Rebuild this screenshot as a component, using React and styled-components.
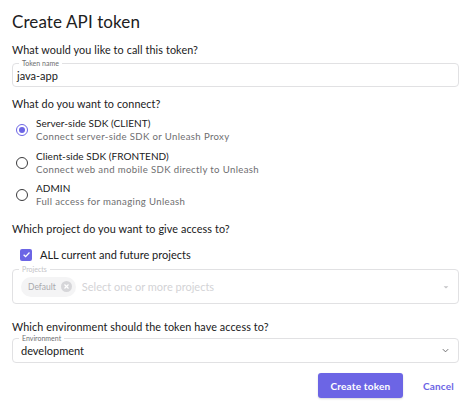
import React from "react";
import styled, { createGlobalStyle } from "styled-components";

const GlobalStyle = createGlobalStyle`
  body {
    margin: 0;
    background: #ffffff;
    font-family: "Lato", "Noto Sans", sans-serif;
    color: #202021;
  }
`;

const Page = styled.div`
  width: 474px;
  height: 414px;
  box-sizing: border-box;
  padding: 10px 15px 0 12px;
  display: flex;
  flex-direction: column;
`;

const Title = styled.h1`
  margin: 0;
  font-size: 17px;
  line-height: 24px;
  font-weight: 400;
  letter-spacing: 0.1px;
`;

const Question = styled.p`
  margin: ${(p) => p.$top || 0}px 0 0;
  font-size: 10.8px;
  line-height: 14px;
  letter-spacing: 0.1px;
`;

const Field = styled.div`
  position: relative;
  margin-top: ${(p) => p.$top || 0}px;
  height: ${(p) => p.$height || 24}px;
  box-sizing: border-box;
  border: 1px solid #e1e1e3;
  border-radius: 4px;
  display: flex;
  align-items: center;
  padding: 0 ${(p) => p.$padX || 8}px;
  gap: 6px;
`;

const FieldLabel = styled.span`
  position: absolute;
  top: -5px;
  left: 6px;
  padding: 0 3px;
  background: #ffffff;
  font-size: 7px;
  line-height: 8px;
  color: ${(p) => (p.$disabled ? "#c4c4c7" : "#6e6e70")};
`;

const Value = styled.span`
  flex: 1;
  font-size: 11px;
  color: #202021;
`;

const Placeholder = styled.span`
  flex: 1;
  font-size: 11px;
  color: #d3d3d6;
`;

const RadioGroup = styled.div`
  margin-top: 6px;
  display: flex;
  flex-direction: column;
  gap: 6.5px;
`;

const RadioRow = styled.label`
  display: flex;
  align-items: center;
  gap: 8px;
  padding-left: 4px;
`;

const RadioCircle = styled.span`
  width: 12px;
  height: 12px;
  box-sizing: border-box;
  border-radius: 50%;
  border: 1.3px solid ${(p) => (p.$checked ? "#6c65e5" : "#3a3a3c")};
  display: flex;
  align-items: center;
  justify-content: center;
  flex-shrink: 0;

  &::after {
    content: "";
    width: 6px;
    height: 6px;
    border-radius: 50%;
    background: #6c65e5;
    display: ${(p) => (p.$checked ? "block" : "none")};
  }
`;

const RadioText = styled.div`
  display: flex;
  flex-direction: column;
`;

const RadioTitle = styled.span`
  font-size: 10px;
  line-height: 13px;
  letter-spacing: 0.05px;
`;

const RadioDesc = styled.span`
  font-size: 9.6px;
  line-height: 13px;
  color: #6e6e70;
  letter-spacing: 0.35px;
`;

const CheckRow = styled.label`
  margin-top: 12px;
  display: flex;
  align-items: center;
  gap: 8px;
  padding-left: 8px;
  font-size: 11px;
`;

const CheckBox = styled.span`
  width: 12px;
  height: 12px;
  border-radius: 2px;
  background: #6c65e5;
  display: flex;
  align-items: center;
  justify-content: center;
`;

const Chip = styled.span`
  display: inline-flex;
  align-items: center;
  gap: 5px;
  height: 20px;
  padding: 0 4px 0 7px;
  border-radius: 10px;
  background: #f4f4f5;
  font-size: 8.5px;
  color: #a9a9ad;
`;

const Actions = styled.div`
  margin-top: 10px;
  display: flex;
  justify-content: flex-end;
  align-items: center;
  gap: 20px;
  padding-right: 5px;
`;

const PrimaryButton = styled.button`
  width: 85px;
  height: 25px;
  border: none;
  border-radius: 3px;
  background: #6c65e5;
  color: #ffffff;
  font-family: inherit;
  font-weight: 700;
  font-size: 10px;
  letter-spacing: 0.2px;
  box-shadow: 0 1px 2px rgba(0, 0, 0, 0.15);
`;

const TextButton = styled.button`
  border: none;
  background: none;
  padding: 0;
  color: #6c65e5;
  font-family: inherit;
  font-weight: 700;
  font-size: 10px;
  letter-spacing: 0.2px;
`;

const options = [
  { title: "Server-side SDK (CLIENT)", desc: "Connect server-side SDK or Unleash Proxy", checked: true },
  { title: "Client-side SDK (FRONTEND)", desc: "Connect web and mobile SDK directly to Unleash" },
  { title: "ADMIN", desc: "Full access for managing Unleash" },
];

const Caret = () => (
  <svg width="8" height="8" viewBox="0 0 10 10">
    <path d="M2 4 L5 7 L8 4 Z" fill="#c4c4c7" />
  </svg>
);

const Chevron = () => (
  <svg width="9" height="9" viewBox="0 0 10 10">
    <path d="M2 3.5 L5 6.5 L8 3.5" fill="none" stroke="#6e6e70" strokeWidth="1.1" />
  </svg>
);

const ChipClose = () => (
  <svg width="11" height="11" viewBox="0 0 12 12">
    <circle cx="6" cy="6" r="6" fill="#d6d6d9" />
    <path d="M3.8 3.8 L8.2 8.2 M8.2 3.8 L3.8 8.2" stroke="#ffffff" strokeWidth="1.3" />
  </svg>
);

export default function App() {
  return (
    <>
      <GlobalStyle />
      <Page>
        <Title>Create API token</Title>
        <Question $top={9}>What would you like to call this token?</Question>
        <Field $top={6} $padX={4}>
          <FieldLabel>Token name</FieldLabel>
          <Value>java-app</Value>
        </Field>

        <Question $top={10}>What do you want to connect?</Question>
        <RadioGroup>
          {options.map((o) => (
            <RadioRow key={o.title}>
              <RadioCircle $checked={o.checked} />
              <RadioText>
                <RadioTitle>{o.title}</RadioTitle>
                <RadioDesc>{o.desc}</RadioDesc>
              </RadioText>
            </RadioRow>
          ))}
        </RadioGroup>

        <Question $top={14}>Which project do you want to give access to?</Question>
        <CheckRow>
          <CheckBox>
            <svg width="9" height="9" viewBox="0 0 10 10">
              <path d="M1.8 5.2 L4 7.3 L8.3 2.8" fill="none" stroke="#ffffff" strokeWidth="1.4" />
            </svg>
          </CheckBox>
          ALL current and future projects
        </CheckRow>
        <Field $top={8} $height={35}>
          <FieldLabel $disabled>Projects</FieldLabel>
          <Chip>
            Default
            <ChipClose />
          </Chip>
          <Placeholder>Select one or more projects</Placeholder>
          <Caret />
        </Field>

        <Question $top={16}>Which environment should the token have access to?</Question>
        <Field $top={4} $height={25}>
          <FieldLabel>Environment</FieldLabel>
          <Value>development</Value>
          <Chevron />
        </Field>

        <Actions>
          <PrimaryButton>Create token</PrimaryButton>
          <TextButton>Cancel</TextButton>
        </Actions>
      </Page>
    </>
  );
}
